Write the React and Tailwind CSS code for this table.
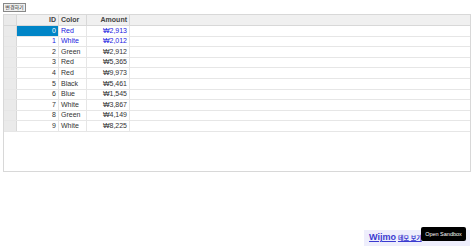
import React from "react"

const rows = [
  { id: 0, color: "Red", amount: "₩2,913" },
  { id: 1, color: "White", amount: "₩2,012" },
  { id: 2, color: "Green", amount: "₩2,912" },
  { id: 3, color: "Red", amount: "₩5,365" },
  { id: 4, color: "Red", amount: "₩9,973" },
  { id: 5, color: "Black", amount: "₩5,461" },
  { id: 6, color: "Blue", amount: "₩1,545" },
  { id: 7, color: "White", amount: "₩3,867" },
  { id: 8, color: "Green", amount: "₩4,149" },
  { id: 9, color: "White", amount: "₩8,225" },
]

const font = { fontFamily: '"Liberation Sans", "Noto Sans CJK KR", sans-serif' }

const App = () => {
  return (
    <div className="relative w-[474px] h-[248px] bg-white text-[7px] text-[#333]" style={font}>
      <div className="px-[3px] pt-[3px]">
        {/* Button */}
        <button className="flex h-[9px] w-[23px] items-center justify-center border border-[#888] bg-[#efefef] text-[5px] leading-none text-[#222]">
          변경하기
        </button>

        {/* Grid */}
        <div className="mt-[2px] h-[158px] w-[468px] border border-[#d8d8d8] bg-white">
          <div className="flex h-[11px] border-b border-[#d8d8d8] bg-[#f0f0f0] font-bold text-[#444]">
            <div className="w-[13px] border-r border-[#d8d8d8] bg-[#eaeaea]" />
            <div className="flex w-[42px] items-center justify-end border-r border-[#d8d8d8] px-[2px]">ID</div>
            <div className="flex w-[28px] items-center border-r border-[#d8d8d8] px-[2px]">Color</div>
            <div className="flex w-[43px] items-center justify-end border-r border-[#d8d8d8] px-[2px]">Amount</div>
          </div>
          {rows.map((r) => {
            const sel = r.id < 2
            return (
              <div key={r.id} className="flex h-[10.6px] border-b border-[#e6e6e6]">
                <div className="w-[13px] border-r border-[#d8d8d8] bg-[#eaeaea]" />
                <div
                  className={`flex w-[42px] items-center justify-end border-r border-[#e6e6e6] px-[2px] ${
                    r.id === 0 ? "bg-[#0085c7] text-white" : sel ? "text-[#2020e0]" : ""
                  }`}
                >
                  {r.id}
                </div>
                <div className={`flex w-[28px] items-center border-r border-[#e6e6e6] px-[2px] ${sel ? "text-[#2020e0]" : ""}`}>
                  {r.color}
                </div>
                <div className={`flex w-[43px] items-center justify-end border-r border-[#e6e6e6] px-[2px] ${sel ? "text-[#2020e0]" : ""}`}>
                  {r.amount}
                </div>
              </div>
            )
          })}
        </div>
      </div>

      {/* Footer link */}
      <div className="absolute left-[364px] top-[230px] flex h-[16px] w-[106px] items-center bg-[#eeeefc] px-[5px] font-bold text-[#3a3ad0]">
        <a className="flex items-baseline gap-[2px] underline">
          <span className="text-[9px]">Wijmo</span>
          <span className="text-[6px]">데모 보기</span>
        </a>
      </div>

      {/* Tooltip */}
      <div className="absolute left-[421px] top-[227px] flex h-[14px] w-[45px] items-center justify-center rounded-[2px] bg-black text-[5.5px] text-white">
        Open Sandbox
      </div>
    </div>
  )
}

export default App
